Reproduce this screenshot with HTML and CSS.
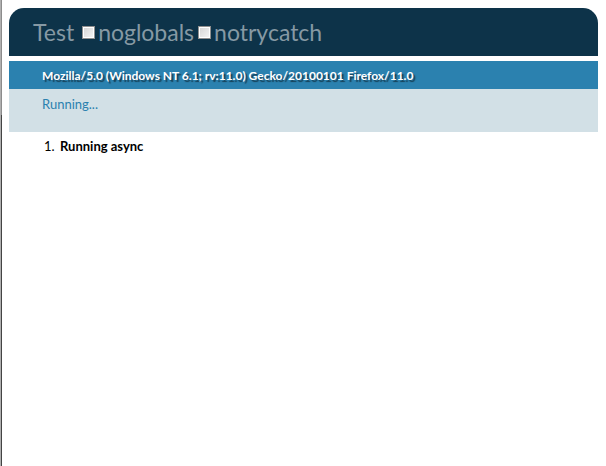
FILE: index.html
```html
<!DOCTYPE html>
<html lang="en">
<head>
  <meta charset="UTF-8" />
  <title>QUnit Test Suite</title>
  <link rel="stylesheet" href="styles.css">
</head>
<body>
  <div class="frame-edge"></div>

  <h1 class="qunit-header">
    <span class="title">Test</span>
    <label class="opt"><input type="checkbox" class="box"> noglobals</label>
    <label class="opt"><input type="checkbox" class="box"> notrycatch</label>
  </h1>
  <div class="banner"></div>
  <h2 class="user-agent">Mozilla/5.0 (Windows NT 6.1; rv:11.0) Gecko/20100101 Firefox/11.0</h2>
  <p class="test-result">Running...</p>

  <ol class="tests">
    <li><strong>Running async</strong></li>
  </ol>
</body>
</html>
```

FILE: styles.css
```css
html, body { height: 100%; }
body { margin: 8px 8px 0 9px; background: #fff; font-family: Lato, "Liberation Sans", sans-serif; }

.frame-edge { position: fixed; left: 0; top: 0; bottom: 0; width: 2px; background: linear-gradient(#8c8c8c 0, #8c8c8c 115px, #444 115px); border-left: 1px solid #b0b0b0; box-sizing: border-box; }

.qunit-header {
  display: flex; align-items: center; gap: 4px;
  height: 48px; margin: 0; padding: 0 0 0 24px; box-sizing: border-box;
  background: #0d3349; color: #8699a4;
  font-size: 23px; font-weight: normal; line-height: 1;
  border-radius: 15px 15px 0 0;
}
.title { margin-right: 4px; }
.opt { display: flex; align-items: center; gap: 3px; }
.box {
  appearance: none; -webkit-appearance: none;
  width: 13px; height: 13px; margin: 0;
  border: 1px solid #8f8f8f; box-shadow: inset 0 0 0 1px #fff;
  background: linear-gradient(135deg, #d4d4d4, #f6f6f6);
  box-sizing: border-box;
}

.banner { height: 5px; }

.user-agent {
  margin: 0; height: 28px; padding-left: 33px; box-sizing: border-box;
  display: flex; align-items: center;
  background: #2b81af; color: #fff;
  font-size: 12px; font-weight: bold;
  text-shadow: rgba(0, 0, 0, 0.5) 2px 2px 1px;
}

.test-result {
  margin: 0; height: 43px; padding: 7px 0 0 33px; box-sizing: border-box;
  background: #d2e0e6; color: #2b81af; font-size: 13px;
}

.tests { margin: 6px 0 0; padding-left: 35px; font-size: 13px; color: #000; list-style: none; counter-reset: item; }
.tests li { line-height: 16px; counter-increment: item; }
.tests li::before { content: counter(item) "."; display: inline-block; width: 16px; font-weight: normal; }
```
